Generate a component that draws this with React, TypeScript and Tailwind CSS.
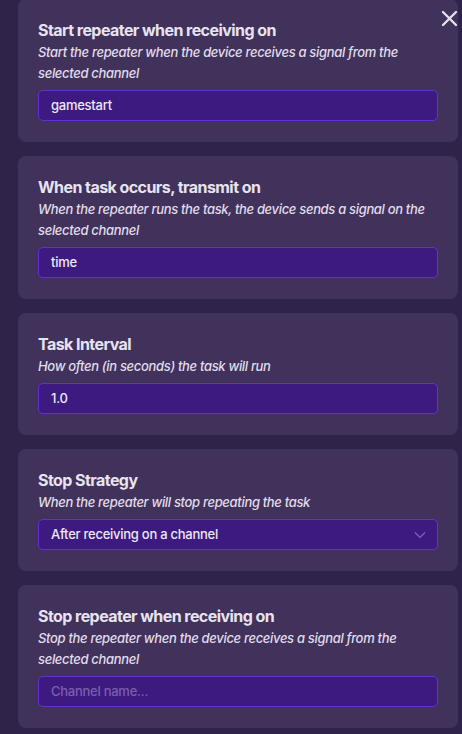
import React from 'react';

type Field = {
  title: string;
  desc: string;
  value?: string;
  placeholder?: string;
  select?: boolean;
};

const fields: Field[] = [
  {
    title: 'Start repeater when receiving on',
    desc: 'Start the repeater when the device receives a signal from the selected channel',
    value: 'gamestart',
  },
  {
    title: 'When task occurs, transmit on',
    desc: 'When the repeater runs the task, the device sends a signal on the selected channel',
    value: 'time',
  },
  {
    title: 'Task Interval',
    desc: 'How often (in seconds) the task will run',
    value: '1.0',
  },
  {
    title: 'Stop Strategy',
    desc: 'When the repeater will stop repeating the task',
    value: 'After receiving on a channel',
    select: true,
  },
  {
    title: 'Stop repeater when receiving on',
    desc: 'Stop the repeater when the device receives a signal from the selected channel',
    placeholder: 'Channel name...',
  },
];

const App: React.FC = () => {
  return (
    <div
      className="relative h-[734px] w-[462px] overflow-hidden bg-[#30234a] text-[#e8e3f0]"
      style={{ fontFamily: 'Inter, "Noto Sans", sans-serif' }}
    >
      <div className="mt-[-1px] flex flex-col gap-[14px] pl-[18px] pr-[4px]">
        {fields.map((f) => (
          <div key={f.title} className="rounded-lg bg-[#40325a] px-5 pt-[19px] pb-[21px]">
            <h3 className="text-[16px] leading-6 font-bold tracking-[-0.035em]">{f.title}</h3>
            <p className="text-[13px] leading-[21px] font-medium italic tracking-[-0.025em] text-[#e2dcec]">
              {f.desc}
            </p>
            <div className="mt-[6px] flex h-[31px] items-center justify-between rounded-[5px] border border-[#6230d8] bg-[#3d1a80] px-3 text-[13px] font-medium tracking-[-0.02em]">
              {f.value ? (
                <span className="text-[#ece8f4]">{f.value}</span>
              ) : (
                <span className="text-[#7b5fae]">{f.placeholder}</span>
              )}
              {f.select && (
                <svg width="12" height="8" viewBox="0 0 12 8" fill="none" className="mr-[-1px]">
                  <path d="M1 1.5l5 5 5-5" stroke="#7e64b4" strokeWidth="1.2" />
                </svg>
              )}
            </div>
          </div>
        ))}
      </div>

      {/* close */}
      <button className="absolute top-[10px] right-[4px] p-0">
        <svg width="17" height="17" viewBox="0 0 17 17" fill="none">
          <path d="M2 2l13 13M15 2L2 15" stroke="#e4e0ec" strokeWidth="2.4" strokeLinecap="round" />
        </svg>
      </button>
    </div>
  );
};

export default App;
